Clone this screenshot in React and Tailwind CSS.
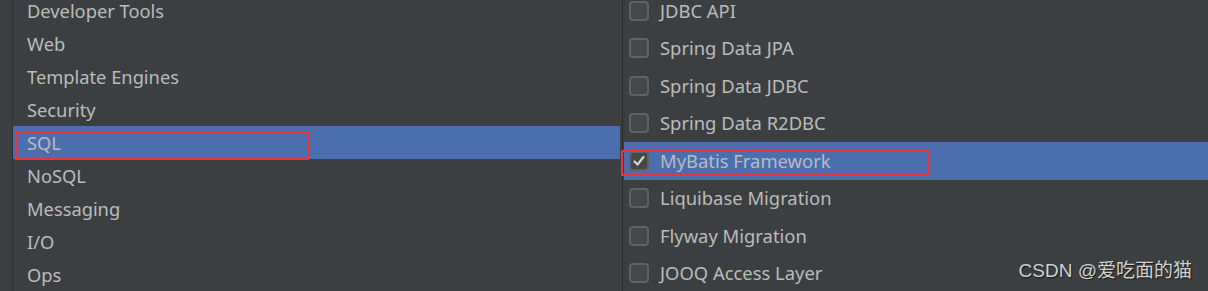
import React from 'react';

const categories = [
  'Developer Tools',
  'Web',
  'Template Engines',
  'Security',
  'SQL',
  'NoSQL',
  'Messaging',
  'I/O',
  'Ops',
];

const deps = [
  { name: 'JDBC API' },
  { name: 'Spring Data JPA' },
  { name: 'Spring Data JDBC' },
  { name: 'Spring Data R2DBC' },
  { name: 'MyBatis Framework', checked: true },
  { name: 'Liquibase Migration' },
  { name: 'Flyway Migration' },
  { name: 'JOOQ Access Layer' },
];

const Checkbox = ({ checked }) => (
  <div className="w-[20px] h-[20px] shrink-0 rounded-[4px] border-2 border-[#5f6263] bg-[#43494a] flex items-center justify-center">
    {checked && (
      <svg width="14" height="14" viewBox="0 0 14 14">
        <path d="M2.5 7.5 L5.5 10.5 L11.5 3" fill="none" stroke="#d4d4d4" strokeWidth="2.2" strokeLinecap="round" strokeLinejoin="round" />
      </svg>
    )}
  </div>
);

const App = () => {
  const selectedCategory = 'SQL';

  return (
    <div
      className="relative flex h-[291px] w-[1208px] overflow-hidden bg-[#3c3f41] text-[#bbbbbb]"
      style={{ fontFamily: '"Noto Sans", "Noto Sans CJK SC", sans-serif' }}
    >
      <div className="w-[13px] shrink-0 border-r border-[#2f3133]" />

      <div className="w-[607px] shrink-0 mt-[-6px]">
        {categories.map((cat) => (
          <div
            key={cat}
            className={`relative h-[33px] flex items-center pl-[14px] text-[18.3px] ${
              cat === selectedCategory ? 'bg-[#4b6eaf]' : ''
            }`}
          >
            {cat}
            {cat === selectedCategory && (
              <div className="absolute left-[2px] top-[5px] w-[294px] h-[29px] border-2 border-[#e8343a]" />
            )}
          </div>
        ))}
      </div>

      <div className="w-[4px] shrink-0 flex justify-center">
        <div className="w-[1px] h-full bg-[#2b2b2b]" />
      </div>

      <div className="flex-1 mt-[-8px]">
        {deps.map((dep) => (
          <div
            key={dep.name}
            className={`relative h-[37.5px] flex items-center pl-[5px] gap-[11px] text-[18.4px] ${
              dep.checked ? 'bg-[#4b6eaf]' : ''
            }`}
          >
            <Checkbox checked={dep.checked} />
            <span>{dep.name}</span>
            {dep.checked && (
              <div className="absolute left-[-3px] top-[8px] w-[309px] h-[26px] border-2 border-[#e8343a]" />
            )}
          </div>
        ))}
      </div>

      <div
        className="absolute right-[16px] bottom-[6px] text-[19px] text-[#d0d0d0] [text-shadow:1px_1px_1px_#1a1a1a]"
        style={{ fontFamily: '"Liberation Sans", "Noto Sans CJK SC", sans-serif' }}
      >
        CSDN @爱吃面的猫
      </div>
    </div>
  );
};

export default App;
